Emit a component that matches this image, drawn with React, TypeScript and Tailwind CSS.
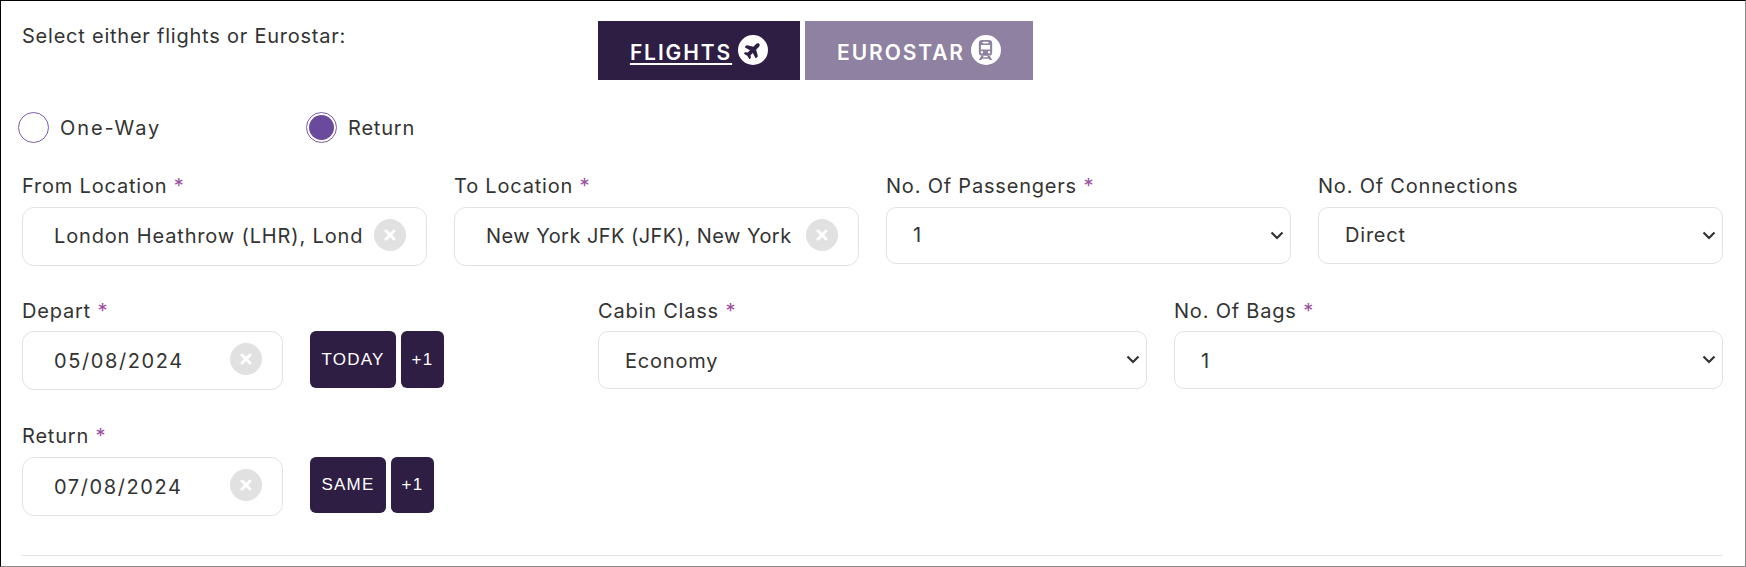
import React from "react";
import { FaPlane } from "react-icons/fa6";

const font = "[font-family:Inter,'Noto_Sans',sans-serif]";

function Label({ text, req = true }: { text: string; req?: boolean }) {
  return (
    <label className="block h-[25px] text-[20px] leading-[25px] text-[#333] tracking-[0.8px]">
      {text}
      {req && <span className="text-[#9b4f9f]"> *</span>}
    </label>
  );
}

function ClearInput({ value, className, tracking }: { value: string; className: string; tracking: string }) {
  return (
    <div className={"relative " + className}>
      <input
        readOnly
        value={value}
        className={"h-[59px] w-full rounded-[12px] border border-[#e2e2e2] bg-white pl-[31px] pr-[60px] text-[20px] text-[#333] outline-none " + tracking}
      />
      <span className="absolute right-[21px] top-[12px] flex h-[32px] w-[32px] items-center justify-center rounded-full bg-[#e1e1e1]">
        <svg width="12" height="12" viewBox="0 0 12 12" className="text-white">
          <path d="M2 2 L10 10 M10 2 L2 10" stroke="currentColor" strokeWidth="3" strokeLinecap="round" />
        </svg>
      </span>
    </div>
  );
}

function Select({ value, height }: { value: string; height: string }) {
  return (
    <div className="relative">
      <select
        defaultValue={value}
        className={"w-full appearance-none rounded-[10px] border border-[#e2e2e2] bg-white pl-[26px] pr-[4px] text-[20px] tracking-[0.8px] text-[#333] outline-none " + height}
      >
        <option>{value}</option>
      </select>
      <svg width="14" height="9" viewBox="0 0 14 9" className="pointer-events-none absolute right-[7px] top-[24px] text-[#333]">
        <path d="M1.5 1.5 L7 7 L12.5 1.5" fill="none" stroke="currentColor" strokeWidth="2.2" />
      </svg>
    </div>
  );
}

function DarkButton({ text, className }: { text: string; className: string }) {
  return (
    <button className={"flex items-center justify-center rounded-[6px] bg-[#2e1e44] [font-family:'Liberation_Sans',sans-serif] text-[17px] tracking-[1.2px] text-white " + className}>
      {text}
    </button>
  );
}

function TrainIcon() {
  return (
    <svg width="17" height="20" viewBox="0 0 20 24" fill="currentColor">
      <path
        fillRule="evenodd"
        d="M6 0h8a4 4 0 0 1 4 4v11a4 4 0 0 1-4 4H6a4 4 0 0 1-4-4V4a4 4 0 0 1 4-4Zm1.5 2a1 1 0 0 0 0 2.2h5a1 1 0 0 0 0-2.2h-5ZM4.5 6v5.5h11V6h-11Zm1.2 7.3a1.5 1.5 0 1 0 0 3 1.5 1.5 0 0 0 0-3Zm8.6 0a1.5 1.5 0 1 0 0 3 1.5 1.5 0 0 0 0-3Z"
      />
      <path d="M5 19h3l-1 1.6h6L12 19h3l3 5h-3l-1-1.6H6L5 24H2l3-5Z" />
    </svg>
  );
}

function TypeButton({ text, active, icon, className }: { text: string; active: boolean; icon: React.ReactNode; className: string }) {
  return (
    <button className={"flex h-[59px] items-center justify-center gap-[6px] pt-[5px] text-[21px] font-semibold tracking-[1.9px] text-white " + className + (active ? " bg-[#2e1e44]" : " bg-[#8e81a1]")}>
      <span className={active ? "underline decoration-[2px] underline-offset-[3px]" : ""}>{text}</span>
      <span className={"-mt-[6px] flex h-[30px] w-[30px] items-center justify-center rounded-full bg-white " + (active ? "text-[#2e1e44]" : "text-[#8e81a1]")}>
        {icon}
      </span>
    </button>
  );
}

function Radio({ label, checked, className, tracking }: { label: string; checked: boolean; className: string; tracking: string }) {
  return (
    <div className={"flex items-center gap-[11px] " + className}>
      <span className="flex h-[31px] w-[31px] items-center justify-center rounded-full border border-[#7a5ca8] bg-white">
        {checked && <span className="h-[25px] w-[25px] rounded-full bg-[#6a4a9c]" />}
      </span>
      <span className={"text-[20px] text-[#333] " + tracking}>{label}</span>
    </div>
  );
}

export default function App() {
  return (
    <div className={"h-[567px] w-[1746px] overflow-hidden border border-t-black border-l-black border-r-[#888] border-b-[#888] bg-white pl-[21px] pr-[22px] pt-[20px] " + font}>
      <div className="grid grid-cols-3 gap-[27px]">
        <div className="pt-[2px] text-[20px] leading-[26px] tracking-[0.77px] text-[#333]">Select either flights or Eurostar:</div>
        <div className="flex gap-[5px]">
          <TypeButton text="FLIGHTS" active className="w-[202px]" icon={<FaPlane className="h-[18px] w-[18px] -rotate-45" />} />
          <TypeButton text="EUROSTAR" active={false} className="w-[228px]" icon={<TrainIcon />} />
        </div>
      </div>

      <div className="mt-[32px] flex -ml-[4px]">
        <Radio label="One-Way" checked={false} tracking="tracking-[1.9px]" className="w-[288px]" />
        <Radio label="Return" checked tracking="tracking-[0.8px]" className="" />
      </div>

      <div className="mt-[31px] grid grid-cols-4 gap-[27px]">
        <div>
          <Label text="From Location" />
          <ClearInput value="London Heathrow (LHR), Lond" tracking="pb-[2px] tracking-[0.85px]" className="mt-[8px]" />
        </div>
        <div>
          <Label text="To Location" />
          <ClearInput value="New York JFK (JFK), New York" tracking="pb-[2px] tracking-[0.45px]" className="mt-[8px]" />
        </div>
        <div>
          <Label text="No. Of Passengers" />
          <div className="mt-[8px]"><Select value="1" height="h-[57px] pb-[2px]" /></div>
        </div>
        <div>
          <Label text="No. Of Connections" req={false} />
          <div className="mt-[8px]"><Select value="Direct" height="h-[57px] pb-[2px]" /></div>
        </div>
      </div>

      <div className="mt-[33px] grid grid-cols-3 gap-[27px]">
        <div>
          <Label text="Depart" />
          <div className="mt-[7px] flex gap-[5px]">
            <ClearInput value="05/08/2024" tracking="pt-[1px] tracking-[1.6px]" className="mr-[22px] w-[261px]" />
            <DarkButton text="TODAY" className="h-[57px] w-[86px]" />
            <DarkButton text="+1" className="h-[57px] w-[43px]" />
          </div>
        </div>
        <div>
          <Label text="Cabin Class" />
          <div className="mt-[7px]"><Select value="Economy" height="h-[58px] pt-[2px]" /></div>
        </div>
        <div>
          <Label text="No. Of Bags" />
          <div className="mt-[7px]"><Select value="1" height="h-[58px] pt-[2px]" /></div>
        </div>
      </div>

      <div className="mt-[34px]">
        <Label text="Return" />
        <div className="mt-[8px] flex gap-[5px]">
          <ClearInput value="07/08/2024" tracking="tracking-[1.6px]" className="mr-[22px] w-[261px]" />
          <DarkButton text="SAME" className="h-[56px] w-[76px]" />
          <DarkButton text="+1" className="h-[56px] w-[43px]" />
        </div>
      </div>

      <hr className="mt-[39px] border-t border-[#e2e2e2]" />
    </div>
  );
}
